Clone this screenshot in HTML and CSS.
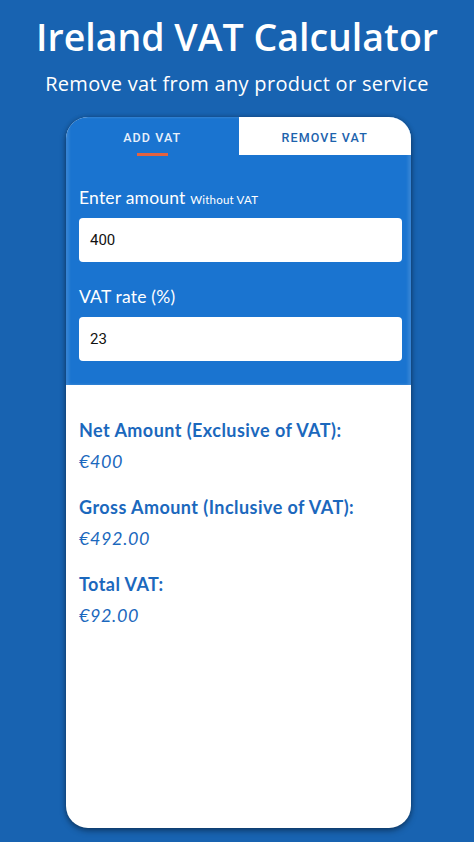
FILE: index.html
```html
<!DOCTYPE html>
<html>
<head>
<meta charset="utf-8">
<link rel="stylesheet" href="styles.css">
</head>
<body>
<div class="screen">
  <h1 class="title">Ireland VAT Calculator</h1>
  <p class="subtitle">Remove vat from any product or service</p>
  <div class="card">
    <div class="top">
      <div class="tabs">
        <div class="tab active">ADD VAT<span class="bar"></span></div>
        <div class="tab inactive">REMOVE VAT</div>
      </div>
      <div class="form">
        <div class="label">Enter amount <span class="small">Without VAT</span></div>
        <div class="input">400</div>
        <div class="label">VAT rate (%)</div>
        <div class="input">23</div>
      </div>
    </div>
    <div class="results">
      <div class="rlabel">Net Amount (Exclusive of VAT):</div>
      <div class="rvalue">€400</div>
      <div class="rlabel">Gross Amount (Inclusive of VAT):</div>
      <div class="rvalue">€492.00</div>
      <div class="rlabel">Total VAT:</div>
      <div class="rvalue">€92.00</div>
    </div>
  </div>
</div>
</body>
</html>
```
FILE: styles.css
```css
* { box-sizing: border-box; }
html, body { margin: 0; padding: 0; }
body {
  width: 474px;
  height: 842px;
  overflow: hidden;
  background: #1863b1;
  font-family: "Inter", "Lato", sans-serif;
}
.screen {
  display: flex;
  flex-direction: column;
  align-items: center;
  height: 842px;
}
.title {
  margin: 14px 0 0;
  font-family: "Open Sans", sans-serif;
  font-weight: 600;
  font-size: 37.5px;
  line-height: 46px;
  color: #fff;
  white-space: nowrap;
}
.subtitle {
  margin: 12px 0 0;
  font-family: "Open Sans", sans-serif;
  font-size: 20px;
  line-height: 24px;
  color: #fff;
  letter-spacing: 0.3px;
  white-space: nowrap;
}
.card {
  margin-top: 21px;
  width: 345px;
  height: 711px;
  margin-left: 3px;
  background: #fff;
  border-radius: 22px;
  overflow: hidden;
  box-shadow: 0 3px 6px rgba(0,0,0,0.35), 0 0 4px rgba(0,0,0,0.25);
  display: flex;
  flex-direction: column;
}
.top {
  background: #1a74d0;
  box-shadow: inset 3px 0 3px rgba(255,255,255,0.12), inset -3px 0 3px rgba(255,255,255,0.12);
  padding-bottom: 24px;
}
.tabs {
  display: flex;
  height: 38px;
}
.tab {
  flex: 1;
  display: flex;
  align-items: center;
  justify-content: center;
  position: relative;
  font-family: "Roboto", sans-serif;
  font-weight: 500;
  font-size: 12.5px;
  letter-spacing: 1.1px;
  padding-top: 2px;
}
.tab.active { color: #e8f0fb; }
.tab.inactive { background: #fff; color: #1d63ad; }
.bar {
  position: absolute;
  left: 50%;
  bottom: -1px;
  width: 31px;
  height: 3px;
  margin-left: -15px;
  background: #e3623f;
}
.form {
  padding: 32px 9px 0 13px;
}
.label {
  font-family: "Lato", sans-serif;
  font-size: 17.5px;
  color: #fff;
  line-height: 22px;
  height: 22px;
  margin-bottom: 9px;
  letter-spacing: 0.2px;
}
.small { font-size: 11.5px; line-height: 1; }
.input {
  height: 44px;
  background: #fff;
  border-radius: 4px;
  display: flex;
  align-items: center;
  padding-left: 11px;
  font-family: "Roboto", sans-serif;
  font-size: 15px;
  color: #111;
  margin-bottom: 24px;
}
.input:last-child { margin-bottom: 0; }
.results {
  padding: 34px 13px 0;
}
.rlabel {
  font-family: "Lato", sans-serif;
  font-weight: 700;
  font-size: 18px;
  line-height: 22px;
  color: #1b68bd;
  margin-bottom: 9px;
  letter-spacing: 0.45px;
}
.rvalue {
  font-family: "Lato", sans-serif;
  font-style: italic;
  font-size: 18px;
  line-height: 22px;
  color: #1b68bd;
  margin-bottom: 24px;
  letter-spacing: 0.6px;
}
```
